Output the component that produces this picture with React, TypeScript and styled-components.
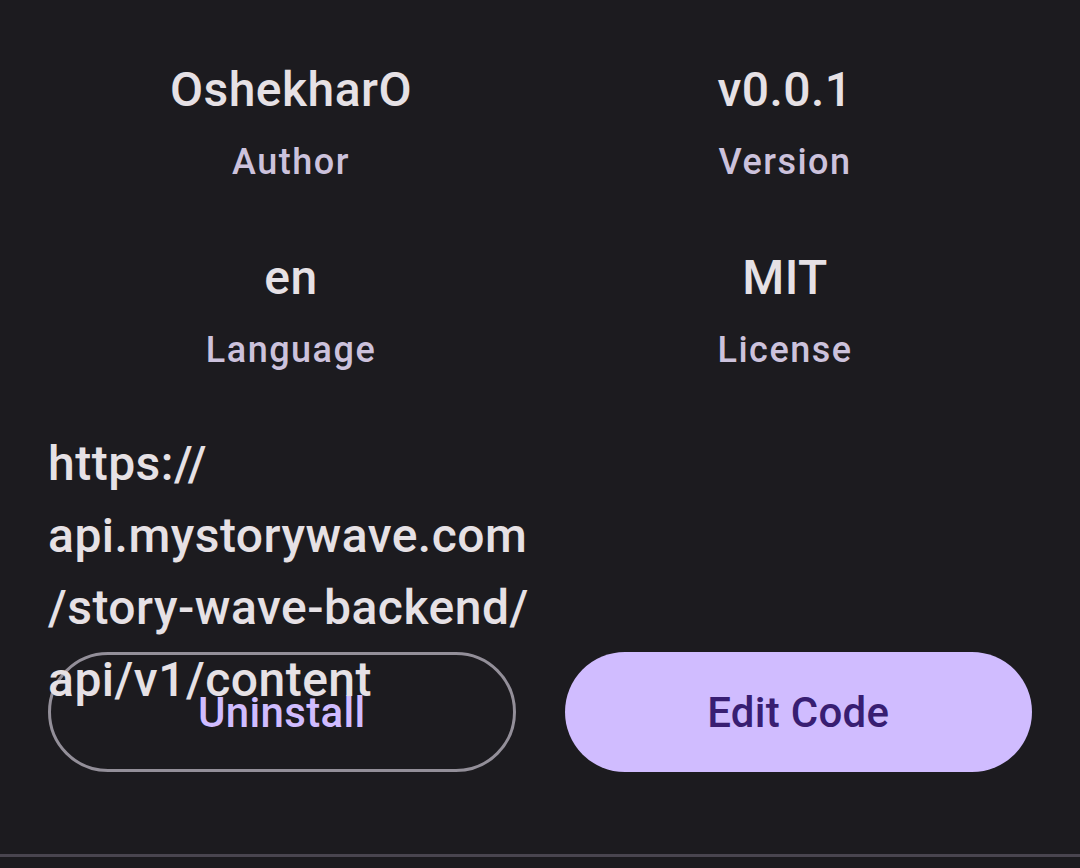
import React from "react";
import styled, { createGlobalStyle } from "styled-components";

const GlobalStyle = createGlobalStyle`
  html, body {
    margin: 0;
    padding: 0;
    background: #1c1b1f;
  }
  body {
    font-family: Roboto, "Noto Sans", "Liberation Sans", sans-serif;
    -webkit-font-smoothing: antialiased;
  }
`;

const Page = styled.div`
  width: 1080px;
  height: 868px;
  box-sizing: border-box;
  padding: 54px 48px 0 48px;
  display: flex;
  flex-direction: column;
  overflow: hidden;
  background: #1c1b1f;
`;

const InfoGrid = styled.div`
  display: grid;
  grid-template-columns: 1fr 1fr;
  row-gap: 56px;
  margin-left: -4px;
`;

const InfoCell = styled.div`
  display: flex;
  flex-direction: column;
  align-items: center;
  gap: 12px;
`;

const Value = styled.div`
  font-size: 48px;
  line-height: 72px;
  font-weight: 500;
  letter-spacing: 0.45px;
  color: #e6e1e5;
  white-space: nowrap;
`;

const Label = styled.div`
  font-size: 36px;
  line-height: 48px;
  font-weight: 500;
  letter-spacing: 1.5px;
  color: #ccc2dc;
  white-space: nowrap;
`;

const Url = styled.div`
  position: relative;
  z-index: 1;
  margin-top: 54px;
  height: 216px;
  font-size: 48px;
  line-height: 72px;
  font-weight: 500;
  letter-spacing: 0.5px;
  color: #e6e1e5;
  white-space: nowrap;
`;

const ButtonRow = styled.div`
  display: grid;
  grid-template-columns: 1fr 1fr;
  column-gap: 49px;
  margin-top: 8px;
`;

const Button = styled.button<{ $filled?: boolean }>`
  height: 120px;
  min-width: 0;
  border-radius: 60px;
  box-sizing: border-box;
  display: flex;
  align-items: center;
  justify-content: center;
  font-family: Roboto, "Noto Sans", "Liberation Sans", sans-serif;
  font-size: 42px;
  font-weight: 500;
  letter-spacing: 0.3px;
  cursor: pointer;
  background: ${(p) => (p.$filled ? "#d0bcff" : "transparent")};
  color: ${(p) => (p.$filled ? "#381e72" : "#d0bcff")};
  border: ${(p) => (p.$filled ? "none" : "3px solid #938f99")};
  padding: 0;
`;

const Divider = styled.div`
  margin: 82px -48px 0 -48px;
  height: 3px;
  background: #49454f;
`;

const info = [
  { value: "OshekharO", label: "Author" },
  { value: "v0.0.1", label: "Version" },
  { value: "en", label: "Language" },
  { value: "MIT", label: "License" },
];

export default function App() {
  return (
    <>
      <GlobalStyle />
      <Page>
        <InfoGrid>
          {info.map((i) => (
            <InfoCell key={i.label}>
              <Value>{i.value}</Value>
              <Label>{i.label}</Label>
            </InfoCell>
          ))}
        </InfoGrid>
        <Url>
          https://
          <br />
          api.mystorywave.com
          <br />
          /story-wave-backend/
          <br />
          api/v1/content
        </Url>
        <ButtonRow>
          <Button>Uninstall</Button>
          <Button $filled>Edit Code</Button>
        </ButtonRow>
        <Divider />
      </Page>
    </>
  );
}
